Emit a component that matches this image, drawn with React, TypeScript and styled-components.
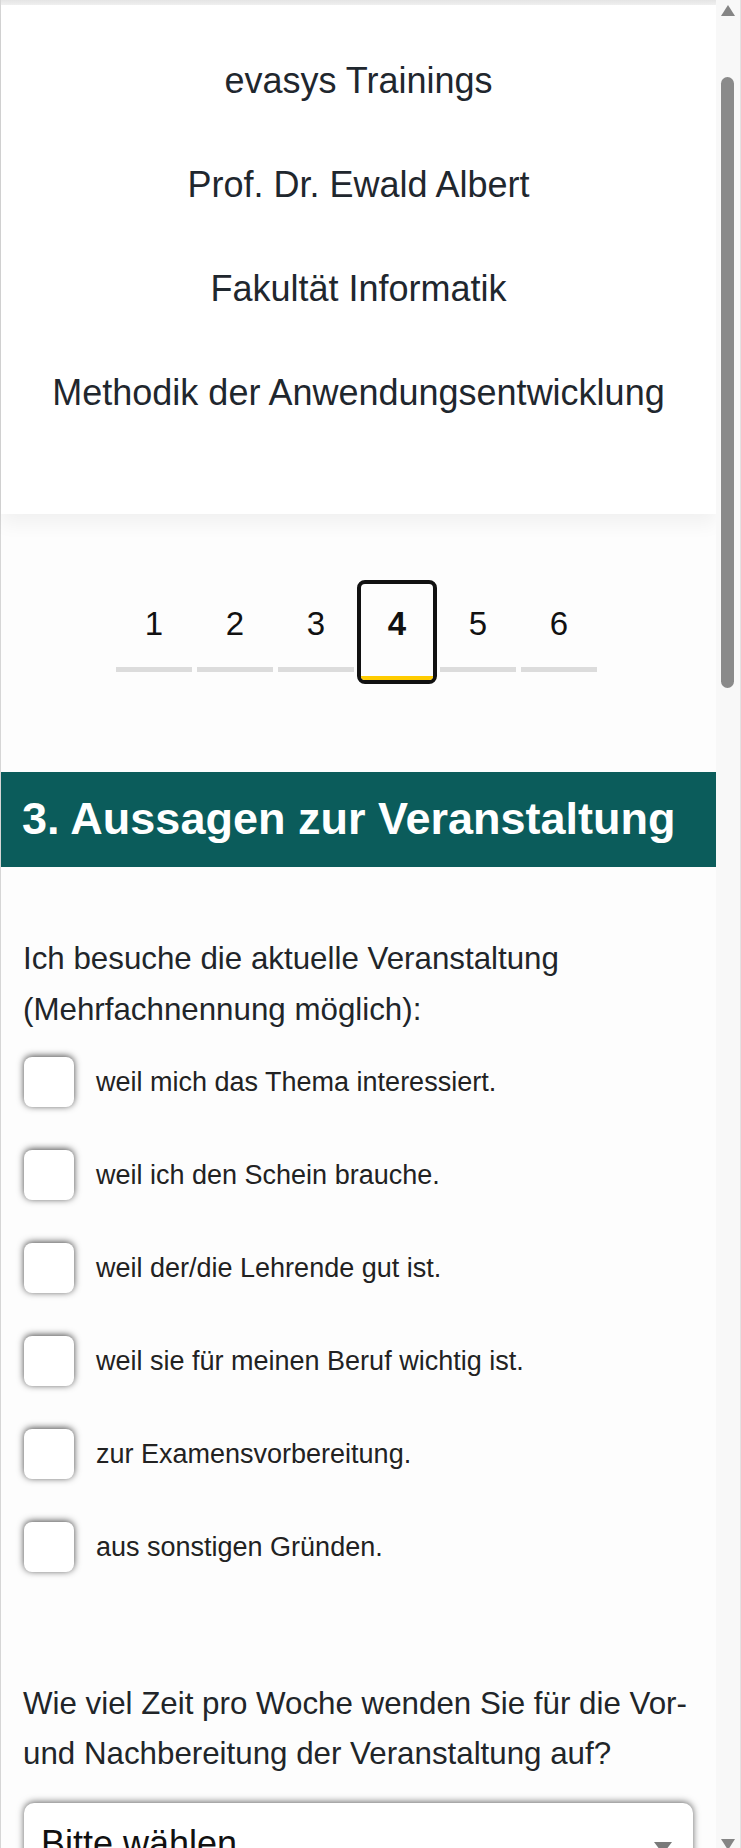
import React from "react";
import styled, { createGlobalStyle, css } from "styled-components";

const GlobalStyle = createGlobalStyle`
  html, body {
    margin: 0;
    padding: 0;
    background: #fdfdfd;
    overflow: hidden;
  }
  body {
    font-family: "Liberation Sans", Arial, sans-serif;
    color: #212529;
  }
  * { box-sizing: border-box; }
`;

const Page = styled.div`
  width: 716px;
  min-height: 100vh;
  border-left: 1px solid #d6d6d6;
  background: #fdfdfd;
`;

const TopShade = styled.div`
  height: 5px;
  background: linear-gradient(#e4e4e4, #f1f1f1);
`;

const HeaderCard = styled.header`
  background: #ffffff;
  padding: 48.5px 0 93.2px;
  display: flex;
  flex-direction: column;
  align-items: center;
  gap: 50.3px;
  box-shadow: 0 10px 18px rgba(0, 0, 0, 0.05);
`;

const HeaderLine = styled.p`
  margin: 0;
  font-size: 36px;
  line-height: 54px;
  color: #1f272e;
  text-align: center;
  white-space: nowrap;
`;

const StepList = styled.ol`
  list-style: none;
  margin: 66.4px 0 0;
  padding: 0 4px 0 0;
  display: flex;
  justify-content: center;
  align-items: flex-start;
  gap: 5px;
`;

const Step = styled.li<{ $active?: boolean }>`
  width: 76px;
  display: flex;
  flex-direction: column;
  align-items: center;
  padding-top: 24.4px;
  ${(p) =>
    p.$active &&
    css`
      width: 80px;
      height: 104px;
      margin: 0 -2px;
      padding-top: 20.4px;
      border: 4px solid #111;
      border-radius: 8px;
      overflow: hidden;
    `}
`;

const StepNum = styled.span<{ $active?: boolean }>`
  font-size: 33px;
  line-height: 40px;
  color: #111;
  font-weight: ${(p) => (p.$active ? 700 : 400)};
`;

const StepBar = styled.span<{ $active?: boolean }>`
  display: block;
  width: 100%;
  height: 5px;
  margin-top: 22.6px;
  background: #dcdcdc;
  ${(p) =>
    p.$active &&
    css`
      height: 4px;
      margin-top: auto;
      background: #ffcc00;
    `}
`;

const SectionTitle = styled.h2`
  margin: 88px 0 0;
  padding: 20.5px 21px;
  background: #0b5c5b;
  color: #ffffff;
  font-size: 45px;
  font-weight: 700;
  line-height: 54px;
  white-space: nowrap;
`;

const SectionBody = styled.section`
  padding: 0 23px 0 22px;
`;

const QuestionBlock = styled.div<{ $gap: number }>`
  margin-top: ${(p) => p.$gap}px;
`;

const Question = styled.p`
  margin: 0 0 21.7px;
  font-size: 31.3px;
  line-height: 50.6px;
  color: #212529;
`;

const Options = styled.ul`
  list-style: none;
  margin: 0;
  padding: 0 0 0 1px;
  display: flex;
  flex-direction: column;
  gap: 43px;
`;

const Option = styled.li`
  display: flex;
  align-items: center;
  gap: 22px;
`;

const CheckBox = styled.span`
  flex: none;
  width: 50px;
  height: 50px;
  border-radius: 8px;
  background: #fff;
  box-shadow: 0 -1px 7px rgba(0, 0, 0, 0.72);
`;

const OptionLabel = styled.span`
  font-size: 27px;
  line-height: 34px;
  color: #222;
`;

const Select = styled.div`
  margin: 23px 0 0 1px;
  width: 669px;
  height: 90px;
  padding: 19px 21px 0 17px;
  display: flex;
  justify-content: space-between;
  align-items: flex-start;
  background: #fff;
  border-radius: 10px;
  box-shadow: 0 -1px 7px rgba(0, 0, 0, 0.6);
`;

const SelectText = styled.span`
  font-size: 36px;
  line-height: 44px;
  color: #111;
`;

const SelectArrow = styled.span`
  margin-top: 20px;
  width: 0;
  height: 0;
  border-left: 9px solid transparent;
  border-right: 9px solid transparent;
  border-top: 12px solid #7a7a7a;
`;

const ScrollTrack = styled.div`
  position: fixed;
  top: 0;
  right: 0;
  width: 25px;
  height: 100vh;
  background: #f8f8f8;
  border-right: 1px solid #e2e2e2;
`;

const ScrollArrow = styled.span<{ $dir: "up" | "down" }>`
  position: absolute;
  left: 5px;
  width: 0;
  height: 0;
  border-left: 7px solid transparent;
  border-right: 7px solid transparent;
  ${(p) =>
    p.$dir === "up"
      ? css`
          top: 5px;
          border-bottom: 11px solid #858585;
        `
      : css`
          top: 1839px;
          border-top: 11px solid #858585;
        `}
`;

const ScrollThumb = styled.span`
  position: absolute;
  top: 77px;
  left: 5px;
  width: 13px;
  height: 611px;
  border-radius: 7px;
  background: #8a8a8a;
`;

const headerLines = [
  "evasys Trainings",
  "Prof. Dr. Ewald Albert",
  "Fakultät Informatik",
  "Methodik der Anwendungsentwicklung",
];

const steps = [1, 2, 3, 4, 5, 6];
const activeStep = 4;

const reasons = [
  "weil mich das Thema interessiert.",
  "weil ich den Schein brauche.",
  "weil der/die Lehrende gut ist.",
  "weil sie für meinen Beruf wichtig ist.",
  "zur Examensvorbereitung.",
  "aus sonstigen Gründen.",
];

export default function App() {
  return (
    <>
      <GlobalStyle />
      <Page>
        <TopShade />
        <HeaderCard>
          {headerLines.map((l) => (
            <HeaderLine key={l}>{l}</HeaderLine>
          ))}
        </HeaderCard>

        <StepList>
          {steps.map((s) => {
            const active = s === activeStep;
            return (
              <Step key={s} $active={active}>
                <StepNum $active={active}>{s}</StepNum>
                <StepBar $active={active} />
              </Step>
            );
          })}
        </StepList>

        <SectionTitle>3. Aussagen zur Veranstaltung</SectionTitle>

        <SectionBody>
          <QuestionBlock $gap={67}>
            <Question>
              Ich besuche die aktuelle Veranstaltung (Mehrfachnennung möglich):
            </Question>
            <Options>
              {reasons.map((r) => (
                <Option key={r}>
                  <CheckBox role="checkbox" aria-checked="false" />
                  <OptionLabel>{r}</OptionLabel>
                </Option>
              ))}
            </Options>
          </QuestionBlock>

          <QuestionBlock $gap={107}>
            <Question>
              Wie viel Zeit pro Woche wenden Sie für die Vor- und Nachbereitung
              der Veranstaltung auf?
            </Question>
            <Select>
              <SelectText>Bitte wählen</SelectText>
              <SelectArrow />
            </Select>
          </QuestionBlock>
        </SectionBody>
      </Page>

      <ScrollTrack>
        <ScrollArrow $dir="up" />
        <ScrollThumb />
        <ScrollArrow $dir="down" />
      </ScrollTrack>
    </>
  );
}
